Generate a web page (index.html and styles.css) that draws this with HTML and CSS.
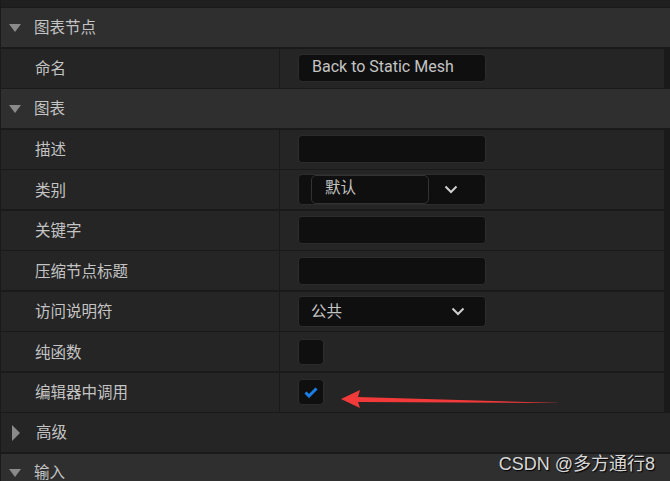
FILE: index.html
```html
<!DOCTYPE html>
<html lang="zh-CN">
<head>
    <meta charset="UTF-8">
    <title>Details</title>
    <link rel="stylesheet" href="styles.css">
</head>
<body>
    <div class="panel">
        <div class="top-strip"></div>

        <div class="category">
            <span class="tri tri-down"></span>
            <span class="cat-title">图表节点</span>
        </div>
        <div class="prop">
            <div class="name">命名</div>
            <div class="value">
                <div class="text-box">Back to Static Mesh</div>
            </div>
        </div>

        <div class="category">
            <span class="tri tri-down"></span>
            <span class="cat-title">图表</span>
        </div>
        <div class="prop">
            <div class="name">描述</div>
            <div class="value"><div class="text-box"></div></div>
        </div>
        <div class="prop">
            <div class="name">类别</div>
            <div class="value">
                <div class="combo">
                    <div class="combo-inner">默认</div>
                    <svg class="chevron" width="14" height="9" viewBox="0 0 14 9">
                        <path d="M1.5 1.5 L7 7 L12.5 1.5" fill="none" stroke="#cfcfcf" stroke-width="2"/>
                    </svg>
                </div>
            </div>
        </div>
        <div class="prop">
            <div class="name">关键字</div>
            <div class="value"><div class="text-box"></div></div>
        </div>
        <div class="prop">
            <div class="name">压缩节点标题</div>
            <div class="value"><div class="text-box"></div></div>
        </div>
        <div class="prop">
            <div class="name">访问说明符</div>
            <div class="value">
                <div class="select">
                    <span>公共</span>
                    <svg class="chevron" width="14" height="9" viewBox="0 0 14 9">
                        <path d="M1.5 1.5 L7 7 L12.5 1.5" fill="none" stroke="#cfcfcf" stroke-width="2"/>
                    </svg>
                </div>
            </div>
        </div>
        <div class="prop">
            <div class="name">纯函数</div>
            <div class="value"><div class="check"></div></div>
        </div>
        <div class="prop">
            <div class="name">编辑器中调用</div>
            <div class="value">
                <div class="check">
                    <svg width="14" height="11" viewBox="0 0 14 11">
                        <path d="M1.5 5.5 L5 9 L12.5 1.5" fill="none" stroke="#1a7fe6" stroke-width="3"/>
                    </svg>
                </div>
            </div>
        </div>

        <div class="category sub">
            <span class="tri tri-right"></span>
            <span class="cat-title">高级</span>
        </div>
        <div class="category">
            <span class="tri tri-down"></span>
            <span class="cat-title">输入</span>
        </div>

        <!-- annotation arrow -->
        <svg class="arrow" width="230" height="24" viewBox="0 0 230 24">
            <path d="M0 10 L19 1 L17 8 L222 14 L17 13 L19 19 Z" fill="#f23a3a"/>
        </svg>
        <div class="watermark">CSDN @多方通行8</div>
    </div>
</body>
</html>
```

FILE: styles.css
```css
/* Details panel, dark editor theme */
:root {
    --bg-top: #1f1f1f;
    --cat-bg: #2f2f2f;
    --row-bg: #252525;
    --line: #1a1a1a;
    --text: #c4c4c4;
    --field: #0f0f0f;
    --field-border: #2c2c2c;
}

body {
    margin: 0;
    background: var(--line);
    font-family: "Noto Sans CJK SC", "Noto Sans", sans-serif;
    font-size: 15.5px;
    color: var(--text);
}

.panel {
    position: relative;
    width: 670px;
    height: 481px;
    overflow: hidden;
    border-left: 1px solid var(--line);
    box-sizing: border-box;
    display: flex;
    flex-direction: column;
    gap: 1.5px;
}

.top-strip {
    height: 6.5px;
    flex: none;
    background: var(--bg-top);
}

.category {
    flex: none;
    height: 39px;
    display: flex;
    align-items: center;
    background: var(--cat-bg);
    padding-left: 8px;
}

.category.sub {
    background: var(--row-bg);
}

.cat-title {
    margin-left: 13px;
    line-height: 1;
    margin-bottom: 2px;
}

.tri {
    width: 0;
    height: 0;
}

.tri-down {
    border-left: 6.5px solid transparent;
    border-right: 6.5px solid transparent;
    border-top: 8px solid #8a8a8a;
}

.tri-right {
    margin-left: 3px;
    margin-right: 3px;
    border-top: 8px solid transparent;
    border-bottom: 8px solid transparent;
    border-left: 8px solid #8a8a8a;
}

.prop {
    flex: none;
    height: 39px;
    display: flex;
}

.name {
    width: 278px;
    padding-left: 34px;
    padding-bottom: 2px;
    box-sizing: border-box;
    display: flex;
    align-items: center;
    background: var(--row-bg);
}

.value {
    flex: 1;
    margin-left: 1px;
    margin-right: 5px;
    border-right: 1px solid var(--line);
    padding-left: 18px;
    display: flex;
    align-items: center;
    background: var(--row-bg);
}

.text-box {
    width: 188px;
    height: 28px;
    box-sizing: border-box;
    border: 1px solid var(--field-border);
    border-radius: 4px;
    background: var(--field);
    font-family: Roboto, "Liberation Sans", sans-serif;
    font-size: 16px;
    line-height: 24px;
    padding-left: 13px;
    color: #c4c4c4;
}

.combo {
    width: 188px;
    height: 31px;
    box-sizing: border-box;
    border: 1px solid var(--field-border);
    border-radius: 4px;
    background: var(--field);
    display: flex;
    align-items: flex-end;
    padding-left: 12px;
}

.combo-inner {
    width: 118px;
    height: 29px;
    box-sizing: border-box;
    border: 1px solid #333;
    border-radius: 5px;
    padding-left: 13px;
    line-height: 20px;
}

.combo .chevron {
    margin-left: 15px;
    align-self: center;
}

.select {
    width: 188px;
    height: 31px;
    box-sizing: border-box;
    border: 1px solid var(--field-border);
    border-radius: 4px;
    background: var(--field);
    display: flex;
    align-items: center;
    justify-content: space-between;
    padding: 0 20px 2px 12px;
}

.select .chevron {
    margin-top: 2px;
}

.check {
    width: 26px;
    height: 26px;
    box-sizing: border-box;
    border: 1px solid var(--field-border);
    border-radius: 4px;
    background: var(--field);
    display: flex;
    align-items: center;
    justify-content: center;
}

.arrow {
    position: absolute;
    left: 340px;
    top: 389px;
}

.watermark {
    position: absolute;
    right: 15px;
    top: 449px;
    font-family: "Liberation Sans", "Noto Sans CJK SC", sans-serif;
    font-size: 18px;
    color: #d8d8d8;
    text-shadow: 1px 1px 1px #000;
}
```
